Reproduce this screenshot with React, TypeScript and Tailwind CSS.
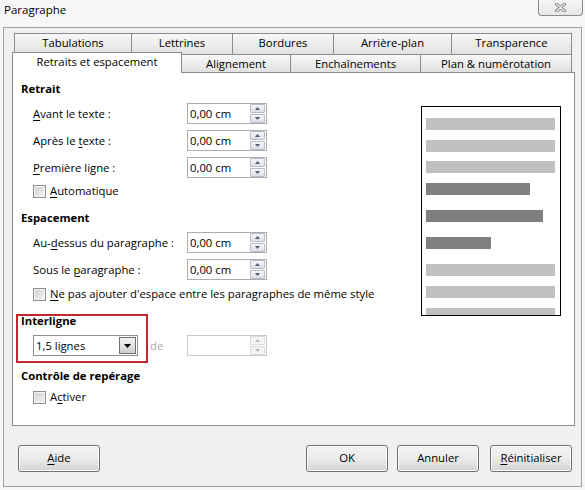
import type { ReactNode } from "react";

// ============================================================================
// Small Win7-style controls
// ============================================================================

function U({ children }: { children: ReactNode }) {
  return <span className="underline decoration-1 underline-offset-[2px]">{children}</span>;
}

function Arrow({ up, color }: { up?: boolean; color: string }) {
  return (
    <svg width="5" height="3" viewBox="0 0 5 3">
      <path d={up ? "M2.5 0 L5 3 L0 3 Z" : "M0 0 L5 0 L2.5 3 Z"} fill={color} />
    </svg>
  );
}

function SpinField({ value, disabled = false }: { value?: string; disabled?: boolean }) {
  return (
    <div
      className={`flex h-[21px] w-[80px] items-center border bg-white pl-[2px] ${
        disabled ? "border-[#c8c8c8]" : "border-[#abadb3]"
      }`}
    >
      <span className="flex-1 leading-[16px]">{value}</span>
      <div className="mr-px flex h-[19px] w-[15px] flex-col gap-px">
        {[true, false].map((up) => (
          <div
            key={String(up)}
            className={`flex flex-1 items-center justify-center rounded-[1px] border ${
              disabled
                ? "border-[#d9d9d9] bg-[#f4f4f4]"
                : "border-[#b9bcc6] bg-linear-to-b from-[#f4f5f9] to-[#dde0e8]"
            }`}
          >
            <Arrow up={up} color={disabled ? "#b5b5b5" : "#4f5d75"} />
          </div>
        ))}
      </div>
    </div>
  );
}

function Checkbox() {
  return (
    <div className="h-[13px] w-[13px] border border-[#8e8f8f] bg-linear-to-br from-[#cfcfcf] to-[#f6f6f6] shadow-[inset_0_0_0_1px_#f4f4f4]" />
  );
}

function CheckRow({ children }: { children: ReactNode }) {
  return (
    <div className="flex h-[16px] items-center gap-[4px] pl-[12px]">
      <Checkbox />
      <span className="leading-[16px]">{children}</span>
    </div>
  );
}

function FieldRow({ label }: { label: ReactNode }) {
  return (
    <div className="mt-[6px] flex h-[21px] items-center pl-[12px]">
      <span className="w-[154px] leading-[16px]">{label}</span>
      <SpinField value="0,00 cm" />
    </div>
  );
}

function Heading({ children, mt }: { children: ReactNode; mt: string }) {
  return <div className={`font-bold leading-[16px] ${mt}`}>{children}</div>;
}

function Button({ children, className = "" }: { children: ReactNode; className?: string }) {
  return (
    <div
      className={`flex h-[27px] w-[82px] items-center justify-center rounded-[3px] border border-[#707070] bg-linear-to-b from-[#f3f3f3] via-[#ebebeb] to-[#d2d2d2] shadow-[inset_0_0_0_1px_#fbfbfb] ${className}`}
    >
      {children}
    </div>
  );
}

// ============================================================================
// Tabs
// ============================================================================

const BACK_TABS = [
  { label: "Tabulations", w: "w-[117px]" },
  { label: "Lettrines", w: "w-[101px]" },
  { label: "Bordures", w: "w-[101px]" },
  { label: "Arrière-plan", w: "w-[118px]" },
  { label: "Transparence", w: "w-[121px] border-r" },
];

const FRONT_TABS = [
  { label: "Alignement", w: "w-[108px]" },
  { label: "Enchaînements", w: "w-[130px] border-l" },
  { label: "Plan & numérotation", w: "w-[152px] border-l border-r" },
];

// preview page: light = surrounding paragraphs, dark = current paragraph
const PREVIEW_BARS = [
  { w: 129, dark: false, mt: "mt-[11px]" },
  { w: 129, dark: false, mt: "mt-[10px]" },
  { w: 129, dark: false, mt: "mt-[9px]" },
  { w: 104, dark: true, mt: "mt-[10px]" },
  { w: 117, dark: true, mt: "mt-[15px]" },
  { w: 65, dark: true, mt: "mt-[15px]" },
  { w: 129, dark: false, mt: "mt-[15px]" },
  { w: 129, dark: false, mt: "mt-[10px]" },
  { w: 129, dark: false, mt: "mt-[10px]" },
];

// ============================================================================
// Dialog
// ============================================================================

export default function App() {
  return (
    <div className="h-[490px] w-[585px] overflow-hidden bg-[#f6f6f6] font-['Open_Sans',sans-serif] text-[11.3px] text-black">
      {/* Title bar */}
      <div className="flex h-[27px] items-start">
        <span className="pl-[4px] pt-[2px] text-[11.5px] leading-[16px]">Paragraphe</span>
        <div className="ml-auto mr-[2px] flex h-[16px] w-[45px] items-center justify-center rounded-b-[4px] border border-t-0 border-[#8a8a8a] bg-linear-to-b from-[#f6f6f6] to-[#e6e6e6]">
          <svg width="11" height="9" viewBox="0 0 11 9">
            <path d="M1.5 1 L9.5 8 M9.5 1 L1.5 8" stroke="#777" strokeWidth="3" strokeLinecap="round" />
            <path d="M1.5 1 L9.5 8 M9.5 1 L1.5 8" stroke="#fafafa" strokeWidth="1.2" strokeLinecap="round" />
          </svg>
        </div>
      </div>

      {/* Frame */}
      <div className="ml-[3px] h-[460px] w-[579px] border border-[#a0a0a0] bg-[#f0f0f0] pt-[5px]">
        <div className="ml-[8px] flex flex-col">
          {/* back row of tabs */}
          <div className="ml-[2px] flex h-[21px]">
            {BACK_TABS.map((t) => (
              <div
                key={t.label}
                className={`flex h-full items-start justify-center border-l border-t border-[#898c95] bg-linear-to-b from-[#f8f8f8] to-[#e1e1e1] pt-px leading-[16px] ${t.w}`}
              >
                {t.label}
              </div>
            ))}
          </div>

          {/* front row of tabs */}
          <div className="relative z-10 -mb-px -mt-[2px] flex h-[21px]">
            <div className="flex h-full w-[170px] justify-center border-l border-r border-t border-[#898c95] bg-white pt-px leading-[16px]">
              Retraits et espacement
            </div>
            {FRONT_TABS.map((t) => (
              <div
                key={t.label}
                className={`flex h-[19px] items-center justify-center self-end border-b border-t border-[#898c95] bg-linear-to-b from-[#f8f8f8] to-[#e1e1e1] leading-[16px] ${t.w}`}
              >
                {t.label}
              </div>
            ))}
          </div>

          {/* Panel */}
          <div className="flex h-[354px] w-[563px] border border-[#898c95] bg-white">
            <div className="w-[408px] pl-[8px]">
              <Heading mt="mt-[8px]">Retrait</Heading>
              <FieldRow label={<><U>A</U>vant le texte :</>} />
              <FieldRow label={<>Après le <U>t</U>exte :</>} />
              <FieldRow label={<><U>P</U>remière ligne :</>} />
              <div className="mt-[5px]">
                <CheckRow>
                  <U>A</U>utomatique
                </CheckRow>
              </div>

              <Heading mt="mt-[11px]">Espacement</Heading>
              <FieldRow label={<>Au-<U>d</U>essus du paragraphe :</>} />
              <FieldRow label={<>Sous le <U>p</U>aragraphe :</>} />
              <div className="mt-[6px]">
                <CheckRow>
                  <U>N</U>e pas ajouter d'espace entre les paragraphes de même style
                </CheckRow>
              </div>

              <div className="relative mt-[11px]">
                <Heading mt="mt-0">Interligne</Heading>
                <div className="mt-[6px] flex h-[21px] items-center pl-[12px]">
                  <div className="flex h-[21px] w-[105px] items-center border border-[#8f8f8f] bg-white pl-[2px]">
                    <span className="flex-1 leading-[16px]">1,5 lignes</span>
                    <div className="mr-px flex h-[17px] w-[17px] items-center justify-center border border-[#707070] bg-linear-to-b from-[#f2f2f2] to-[#cfcfcf]">
                      <svg width="7" height="4" viewBox="0 0 7 4">
                        <path d="M0 0 L7 0 L3.5 4 Z" fill="#000" />
                      </svg>
                    </div>
                  </div>
                  <span className="w-[49px] pl-[12px] leading-[16px] text-[#a8a8a8]">de</span>
                  <SpinField disabled />
                </div>
                {/* annotation frame */}
                <div className="absolute left-[-5px] top-px h-[49px] w-[132px] border-2 border-[#c1272d]" />
              </div>

              <Heading mt="mt-[12px]">Contrôle de repérage</Heading>
              <div className="mt-[5px]">
                <CheckRow>
                  A<U>c</U>tiver
                </CheckRow>
              </div>
            </div>

            {/* Preview */}
            <div className="mt-[33px] h-[210px] w-[140px] overflow-hidden border border-black px-[4px]">
              {PREVIEW_BARS.map((b, i) => (
                <div
                  key={i}
                  className={`h-[12px] ${b.mt} ${b.dark ? "bg-[#808080]" : "bg-[#c0c0c0]"}`}
                  style={{ width: b.w }}
                />
              ))}
            </div>
          </div>

          {/* Buttons */}
          <div className="mt-[19px] flex">
            <Button className="ml-[6px]">
              <U>A</U>ide
            </Button>
            <Button className="ml-[206px]">OK</Button>
            <Button className="ml-[9px]">Annuler</Button>
            <Button className="ml-[11px] w-[81px]">
              <U>R</U>éinitialiser
            </Button>
          </div>
        </div>
      </div>
    </div>
  );
}
